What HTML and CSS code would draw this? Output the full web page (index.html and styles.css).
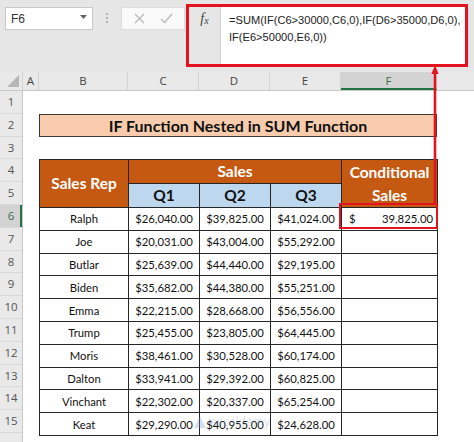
FILE: index.html
```html
<!DOCTYPE html>
<html>
<head>
<meta charset="utf-8">
<link rel="stylesheet" href="styles.css">
</head>
<body>
<div class="fbar">
  <div class="namebox"><span>F6</span><svg class="dd" width="7" height="4" viewBox="0 0 7 4"><polygon points="0,0 7,0 3.5,4" fill="#666"/></svg></div>
  <div class="grip"><i></i><i></i><i></i></div>
  <div class="btns">
    <svg width="11" height="11" viewBox="0 0 11 11"><path d="M1 1 L10 10 M10 1 L1 10" stroke="#b9b9b9" stroke-width="1.3" fill="none"/></svg>
    <svg width="13" height="11" viewBox="0 0 13 11"><path d="M1 6 L4.5 9.5 L12 1" stroke="#b9b9b9" stroke-width="1.3" fill="none"/></svg>
  </div>
  <div class="fxwrap">
    <div class="fx"><i>f</i><sub>x</sub></div>
    <div class="formula">=SUM(IF(C6&gt;30000,C6,0),IF(D6&gt;35000,D6,0),<br>IF(E6&gt;50000,E6,0))</div>
  </div>
</div>
<div class="sheet">
  <div class="colhead">
    <div class="ch corner"><svg width="12" height="12" viewBox="0 0 12 12"><polygon points="12,0 12,12 0,12" fill="#b5b5b5"/></svg></div>
    <div class="ch c-a">A</div>
    <div class="ch c-b">B</div>
    <div class="ch c-n">C</div>
    <div class="ch c-n">D</div>
    <div class="ch c-n">E</div>
    <div class="ch c-f sel">F</div>
    <div class="ch c-g"></div>
  </div>
  <div class="sbody">
    <div class="rownums">
      <div class="rh">1</div><div class="rh">2</div><div class="rh">3</div><div class="rh">4</div>
      <div class="rh">5</div><div class="rh sel">6</div><div class="rh">7</div><div class="rh">8</div>
      <div class="rh">9</div><div class="rh">10</div><div class="rh">11</div><div class="rh">12</div>
      <div class="rh">13</div><div class="rh">14</div><div class="rh">15</div><div class="rh"></div>
    </div>
    <div class="cells">
      <div class="title">IF Function Nested in SUM Function</div>
      <table class="data">
        <colgroup><col class="w-b"><col class="w-n"><col class="w-n"><col class="w-n"><col class="w-f"></colgroup>
        <tr><th class="o" rowspan="2">Sales Rep</th><th class="o" colspan="3">Sales</th><th class="o" rowspan="2">Conditional<br>Sales</th></tr>
        <tr><th class="q">Q1</th><th class="q">Q2</th><th class="q">Q3</th></tr>
        <tr><td>Ralph</td><td>$26,040.00</td><td>$39,825.00</td><td>$41,024.00</td><td><div class="acc"><span>$</span><span>39,825.00</span></div></td></tr>
        <tr><td>Joe</td><td>$20,031.00</td><td>$43,004.00</td><td>$55,292.00</td><td></td></tr>
        <tr><td>Butlar</td><td>$25,639.00</td><td>$44,440.00</td><td>$29,195.00</td><td></td></tr>
        <tr><td>Biden</td><td>$35,682.00</td><td>$44,380.00</td><td>$55,251.00</td><td></td></tr>
        <tr><td>Emma</td><td>$22,215.00</td><td>$28,668.00</td><td>$56,556.00</td><td></td></tr>
        <tr><td>Trump</td><td>$25,455.00</td><td>$23,805.00</td><td>$64,445.00</td><td></td></tr>
        <tr><td>Moris</td><td>$38,461.00</td><td>$30,528.00</td><td>$60,174.00</td><td></td></tr>
        <tr><td>Dalton</td><td>$33,941.00</td><td>$29,392.00</td><td>$60,825.00</td><td></td></tr>
        <tr><td>Vinchant</td><td>$22,302.00</td><td>$20,337.00</td><td>$65,254.00</td><td></td></tr>
        <tr><td>Keat</td><td>$29,290.00</td><td>$40,955.00</td><td>$24,628.00</td><td></td></tr>
      </table>
    </div>
  </div>
</div>
<div class="hl"></div>
<svg class="arrow" width="12" height="141" viewBox="0 0 12 141"><line x1="6" y1="9" x2="6" y2="140" stroke="#e3141f" stroke-width="2.6"/><polygon points="6,1 2.4,10 9.6,10" fill="#e3141f"/></svg>
<div class="wm"><span class="wm-logo"></span><span class="wm-text">exceldemy</span></div>
</body>
</html>
```

FILE: styles.css
```css
* { box-sizing: border-box; }
html, body { margin: 0; padding: 0; }
body {
  width: 474px;
  height: 442px;
  overflow: hidden;
  background: #e6e6e6;
  font-family: "Open Sans", sans-serif;
  position: relative;
}

/* formula bar */
.fbar {
  height: 72px;
  display: flex;
  align-items: flex-start;
  padding-left: 5px;
}
.namebox {
  margin-top: 7px;
  width: 88px;
  height: 23px;
  background: #fff;
  border: 1px solid #c9c9c9;
  display: flex;
  align-items: center;
  justify-content: space-between;
  padding: 0 5px 0 5px;
  font: 12px "Liberation Sans", sans-serif;
  color: #333;
}
.namebox .dd { margin-bottom: 3px; }
.grip {
  margin: 13px 13px 0;
  width: 2px;
  display: flex;
  flex-direction: column;
  gap: 2px;
}
.grip i { display: block; width: 2px; height: 2px; background: #b5b5b5; }
.btns {
  margin-top: 7px;
  width: 64px;
  height: 23px;
  background: #fafafa;
  border: 1px solid #dcdcdc;
  display: flex;
  align-items: center;
  justify-content: space-around;
  padding: 0 4px;
}
.fxwrap {
  margin-top: 4px;
  margin-left: 1px;
  width: 282px;
  height: 63px;
  border: 3px solid #e3141f;
  display: flex;
  background: #fff;
}
.fx {
  width: 32px;
  background: #e6e6e6;
  border-right: 1px solid #d2d2d2;
  text-align: center;
  padding-top: 4px;
  font: italic 14px "Liberation Serif", serif;
  color: #444;
}
.fx sub { font-size: 10px; vertical-align: -1px; }
.formula {
  flex: 1;
  padding: 4.5px 0 0 8px;
  font: 11.1px/17px "Liberation Sans", sans-serif;
  color: #222;
  white-space: nowrap;
}

/* sheet */
.sheet {
  display: flex;
  flex-direction: column;
  height: 370px;
  background: #fff;
}
.colhead {
  display: flex;
  height: 19px;
  background: #e9e9e9;
  border-bottom: 1px solid #c8c8c8;
}
.ch {
  border-right: 1px solid #d3d3d3;
  font-size: 11.5px;
  color: #444;
  text-align: center;
  line-height: 18px;
}
.corner { width: 23px; display: flex; align-items: flex-end; justify-content: flex-end; padding: 0 3px 3px 0; }
.c-a { width: 16px; }
.c-b { width: 89px; }
.c-n { width: 71px; }
.c-f { width: 96px; }
.c-g { flex: 1; border-right: none; }
.ch.sel {
  background: #d3d3d3;
  color: #3b6f4c;
  border-bottom: 2px solid #217346;
}

.sbody { display: flex; flex: 1; }
.rownums {
  width: 23px;
  background: #e9e9e9;
  border-right: 1px solid #c8c8c8;
}
.rh {
  height: 22.8px;
  border-bottom: 1px solid #d8d8d8;
  text-align: center;
  font-size: 11.5px;
  line-height: 22px;
  color: #555;
}
.rh.sel {
  background: #d3d3d3;
  color: #3b6f4c;
  box-shadow: inset -2px 0 0 #217346;
}

.cells {
  flex: 1;
  display: grid;
  grid-template-columns: 16px 89px 71px 71px 71px 96px 1fr;
  grid-template-rows: repeat(16, 22.8px);
}
.title {
  grid-column: 2 / 7;
  grid-row: 2;
  background: #f8cbad;
  border: 1px solid #3a3a3a;
  display: flex;
  align-items: center;
  justify-content: center;
  font: bold 16px Lato, sans-serif;
  color: #111;
}
.data {
  grid-column: 2 / 7;
  grid-row: 4 / 16;
  width: 398px;
  border-collapse: collapse;
  table-layout: fixed;
  font: 11.3px Lato, sans-serif;
  color: #111;
}
.w-b { width: 89px; }
.w-n { width: 71px; }
.w-f { width: 96px; }
.data tr { height: 22.8px; }
.data th, .data td {
  border: 1px solid #262626;
  padding: 0;
  text-align: center;
  vertical-align: middle;
}
.data th { font: bold 15.5px/22.8px Lato, sans-serif; }
.data th.o { background: #c65911; color: #fff; }
.data th.q { background: #bdd7ee; color: #111; }
.acc {
  display: flex;
  justify-content: space-between;
  padding: 0 4px 0 7px;
}

/* annotations */
.hl {
  position: absolute;
  left: 339px;
  top: 203px;
  width: 99px;
  height: 26px;
  border: 2.5px solid #e3141f;
}
.arrow {
  position: absolute;
  left: 428.5px;
  top: 64px;
}
.wm {
  position: absolute;
  left: 194px;
  top: 416px;
  display: flex;
  align-items: center;
  gap: 4px;
  opacity: 0.3;
  pointer-events: none;
}
.wm-logo {
  width: 0;
  height: 0;
  border-left: 6px solid transparent;
  border-right: 6px solid transparent;
  border-bottom: 12px solid #7f9cc4;
}
.wm-text {
  font: 12px "Open Sans", sans-serif;
  color: #7f9cc4;
  line-height: 12px;
}
```
